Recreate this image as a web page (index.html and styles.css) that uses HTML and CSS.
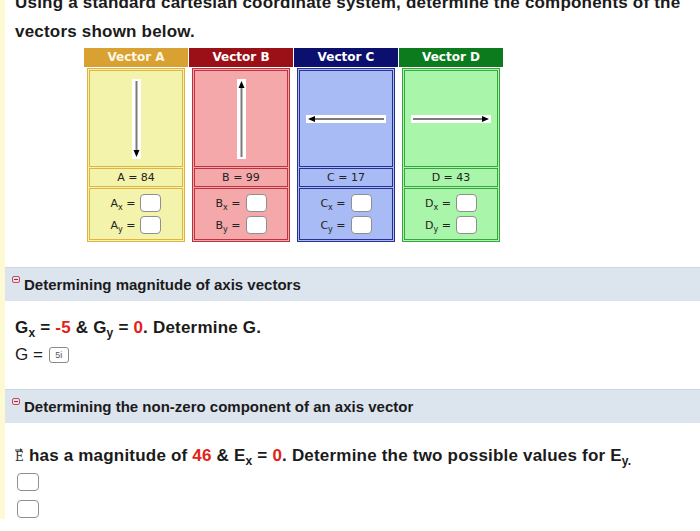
FILE: index.html
```html
<!DOCTYPE html>
<html>
<head>
<meta charset="utf-8">
<link rel="stylesheet" href="styles.css">
</head>
<body>
<div class="page">
  <p class="title">Using a standard cartesian coordinate system, determine the components of the<br>vectors shown below.</p>

  <div class="vtable">
    <div class="vcol col-a">
      <div class="vhead">Vector A</div>
      <div class="vbody">
        <div class="cell pic">
          <svg width="9" height="80" viewBox="0 0 9 80"><rect width="9" height="80" fill="#fff"/><line x1="4.5" y1="2" x2="4.5" y2="72" stroke="#7a7a7a" stroke-width="2"/><polygon points="1.5,71 7.5,71 4.5,78" fill="#000"/></svg>
        </div>
        <div class="cell val">A = 84</div>
        <div class="cell inp">
          <div class="irow"><span class="lbl">A<sub>x</sub> =</span><span class="ibox"></span></div>
          <div class="irow"><span class="lbl">A<sub>y</sub> =</span><span class="ibox"></span></div>
        </div>
      </div>
    </div>
    <div class="vcol col-b">
      <div class="vhead">Vector B</div>
      <div class="vbody">
        <div class="cell pic">
          <svg width="9" height="80" viewBox="0 0 9 80"><rect width="9" height="80" fill="#fff"/><line x1="4.5" y1="8" x2="4.5" y2="78" stroke="#7a7a7a" stroke-width="2"/><polygon points="1.5,9 7.5,9 4.5,2" fill="#000"/></svg>
        </div>
        <div class="cell val">B = 99</div>
        <div class="cell inp">
          <div class="irow"><span class="lbl">B<sub>x</sub> =</span><span class="ibox"></span></div>
          <div class="irow"><span class="lbl">B<sub>y</sub> =</span><span class="ibox"></span></div>
        </div>
      </div>
    </div>
    <div class="vcol col-c">
      <div class="vhead">Vector C</div>
      <div class="vbody">
        <div class="cell pic">
          <svg width="80" height="8" viewBox="0 0 80 8"><rect width="80" height="8" fill="#fff"/><line x1="8" y1="4" x2="78" y2="4" stroke="#7a7a7a" stroke-width="2"/><polygon points="9,1 9,7 2,4" fill="#000"/></svg>
        </div>
        <div class="cell val">C = 17</div>
        <div class="cell inp">
          <div class="irow"><span class="lbl">C<sub>x</sub> =</span><span class="ibox"></span></div>
          <div class="irow"><span class="lbl">C<sub>y</sub> =</span><span class="ibox"></span></div>
        </div>
      </div>
    </div>
    <div class="vcol col-d">
      <div class="vhead">Vector D</div>
      <div class="vbody">
        <div class="cell pic">
          <svg width="80" height="8" viewBox="0 0 80 8"><rect width="80" height="8" fill="#fff"/><line x1="2" y1="4" x2="72" y2="4" stroke="#7a7a7a" stroke-width="2"/><polygon points="71,1 71,7 78,4" fill="#000"/></svg>
        </div>
        <div class="cell val">D = 43</div>
        <div class="cell inp">
          <div class="irow"><span class="lbl">D<sub>x</sub> =</span><span class="ibox"></span></div>
          <div class="irow"><span class="lbl">D<sub>y</sub> =</span><span class="ibox"></span></div>
        </div>
      </div>
    </div>
  </div>

  <div class="band band1"><span class="collapse"></span><span class="btext">Determining magnitude of axis vectors</span></div>

  <p class="q q-g">G<sub>x</sub> = <span class="red">-5</span> &amp; G<sub>y</sub> = <span class="red">0</span>. Determine G.</p>
  <p class="ans">G = <span class="sbox">5i</span></p>

  <div class="band band2"><span class="collapse"></span><span class="btext">Determining the non-zero component of an axis vector</span></div>

  <p class="q q-e"><span class="vecE"><svg class="varrow" width="8" height="4" viewBox="0 0 8 4"><line x1="0" y1="2" x2="6" y2="2" stroke="#333" stroke-width="1"/><polygon points="5,0.3 8,2 5,3.7" fill="#333"/></svg>E</span> has a magnitude of <span class="red">46</span> &amp; E<sub>x</sub> = <span class="red">0</span>. Determine the two possible values for E<sub class="ysub">y.</sub></p>
  <div class="abox first"></div>
  <div class="abox"></div>
</div>
</body>
</html>
```
FILE: styles.css
```css
html, body {
  margin: 0;
  padding: 0;
  background: #fff;
}
body {
  width: 700px;
  height: 531px;
  overflow: hidden;
  font-family: "Liberation Sans", Arial, sans-serif;
  color: #1b1b1b;
}
.page {
  border-left: 5px solid #fcf9d3;
  min-height: 531px;
  box-sizing: border-box;
}
.title {
  margin: -12px 0 0 10px;
  font-size: 17px;
  font-weight: bold;
  line-height: 29px;
  letter-spacing: 0.2px;
  white-space: nowrap;
}
.vtable {
  display: flex;
  gap: 1px;
  margin: 2px 0 0 79px;
  font-family: "DejaVu Sans", Verdana, sans-serif;
}
.vcol {
  width: 104px;
  display: flex;
  flex-direction: column;
}
.vhead {
  height: 19px;
  line-height: 19px;
  text-align: center;
  color: #fff;
  font-weight: bold;
  font-size: 12px;
}
.vbody {
  margin: 1px 3px 0;
  border: 1px solid var(--bd);
  padding: 1px;
  display: flex;
  flex-direction: column;
  gap: 1px;
  background: var(--bg);
}
.cell {
  border: 1px solid var(--bd);
  background: var(--bg);
  display: flex;
  align-items: center;
  justify-content: center;
}
.pic { height: 95px; }
.pic svg { display: block; }
.val {
  height: 17px;
  font-size: 11px;
  color: #222;
}
.inp {
  height: 50px;
  flex-direction: column;
  gap: 4px;
}
.irow {
  display: flex;
  align-items: center;
  font-size: 11px;
  color: #222;
}
.lbl {
  white-space: nowrap;
  margin-right: 5px;
}
.lbl sub {
  font-size: 8px;
  vertical-align: -3px;
  line-height: 0;
}
.ibox {
  display: inline-block;
  width: 19px;
  height: 16px;
  border: 1px solid #8f8f8f;
  border-radius: 4px;
  background: #fff;
}
.col-a { --bd: #dfb443; --bg: #f3f3ab; }
.col-a .vhead { background: #d9a131; color: #fff7e6; }
.col-b { --bd: #bb3340; --bg: #f5a8a9; }
.col-b .vhead { background: #9b0f17; }
.col-c { --bd: #2a3090; --bg: #a9bbf4; }
.col-c .vhead { background: #0b106e; }
.col-d { --bd: #3aa443; --bg: #a9f5a9; }
.col-d .vhead { background: #0c7b1d; }

.band {
  display: flex;
  align-items: center;
  height: 33px;
  background: #dce4ee;
  border-top: 1px solid #cfd6de;
  font-size: 15px;
  font-weight: bold;
  color: #1b1b1b;
}
.band1 { margin-top: 25px; }
.band2 { margin-top: 22px; }
.collapse {
  width: 6px;
  height: 5px;
  border: 1px solid #b5506a;
  border-radius: 2px;
  background: #f6dbe0;
  margin: 0 4px 0 7px;
  position: relative;
  top: -5px;
}
.collapse::after {
  content: "";
  position: absolute;
  left: 1px;
  right: 1px;
  top: 2px;
  height: 1px;
  background: #9a2a45;
}
.q {
  margin: 0 0 0 10px;
  font-size: 17px;
  font-weight: bold;
  line-height: 24px;
  letter-spacing: 0.2px;
  white-space: nowrap;
}
.q sub {
  font-size: 12px;
  vertical-align: -4px;
  line-height: 0;
}
.q-g { margin-top: 15px; }
.q-e { margin-top: 21px; }
.red { color: #e2231a; }
.ans {
  margin: 3px 0 0 10px;
  font-size: 17px;
  line-height: 24px;
  display: flex;
  align-items: center;
}
.sbox {
  display: inline-flex;
  align-items: center;
  justify-content: center;
  width: 18px;
  height: 14px;
  margin-left: 6px;
  border: 1px solid #8a8a8a;
  border-radius: 3px;
  font-size: 9px;
  color: #555;
  font-weight: normal;
}
.vecE {
  display: inline-block;
  font-family: "DejaVu Serif", "Liberation Serif", serif;
  font-weight: normal;
  font-size: 12px;
  line-height: 11px;
  color: #333;
  text-align: center;
}
.varrow {
  display: block;
  margin: 0 auto 0;
}
.q .ysub {
  font-size: 12px;
  vertical-align: -4px;
}
.abox {
  width: 20px;
  height: 16px;
  margin: 9px 0 0 12px;
  border: 1px solid #8f8f8f;
  border-radius: 4px;
  background: #fff;
}
.abox.first { margin-top: 5px; }
```
